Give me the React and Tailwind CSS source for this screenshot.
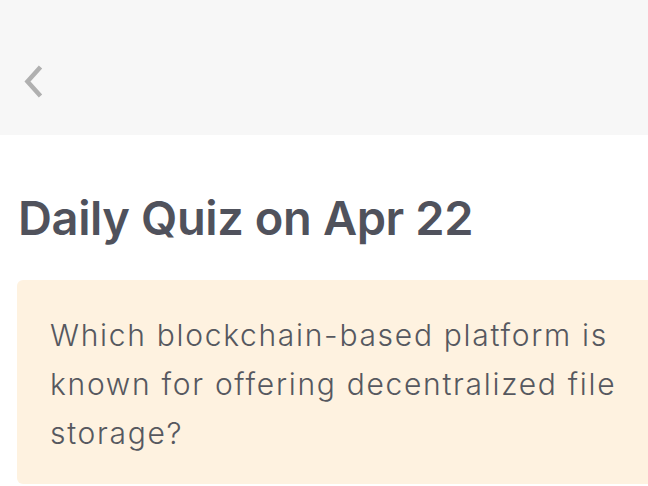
export default function App() {
  return (
    <div className="w-[648px] h-[486px] overflow-hidden bg-white" style={{ fontFamily: 'Inter, "Noto Sans", sans-serif' }}>
      {/* Header */}
      <div className="h-[135px] bg-[#f7f7f7] flex items-start pl-[22px] pt-[63px]">
        <svg width="22" height="37" viewBox="0 0 22 37" fill="none">
          <polyline points="18.5,4 5.5,18.5 18.5,33" stroke="#b0b0b0" strokeWidth="4.5" strokeLinecap="butt" strokeLinejoin="miter" />
        </svg>
      </div>

      {/* Title */}
      <h1 className="mt-[55px] pl-[18px] text-[47px] leading-[56px] font-semibold text-[#50525c] tracking-[-0.4px]">
        Daily Quiz on Apr 22
      </h1>

      {/* Question card */}
      <div className="mt-[34px] ml-[17px] bg-[#fef2e0] rounded-l-[6px] pl-[33px] pr-[20px] pt-[31px] pb-[26px]">
        <p className="text-[30px] leading-[49px] text-[#56585f] font-light tracking-[1.7px]">
          Which blockchain-based platform is known for offering decentralized file storage?
        </p>
      </div>
    </div>
  );
}
